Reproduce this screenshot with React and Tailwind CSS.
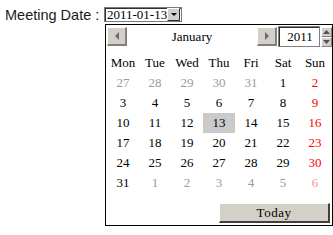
import React from "react";

const serif = { fontFamily: '"Liberation Serif", "Times New Roman", serif' };

const weeks = [
  [["27", "o"], ["28", "o"], ["29", "o"], ["30", "o"], ["31", "o"], ["1", "n"], ["2", "s"]],
  [["3", "n"], ["4", "n"], ["5", "n"], ["6", "n"], ["7", "n"], ["8", "n"], ["9", "s"]],
  [["10", "n"], ["11", "n"], ["12", "n"], ["13", "t"], ["14", "n"], ["15", "n"], ["16", "s"]],
  [["17", "n"], ["18", "n"], ["19", "n"], ["20", "n"], ["21", "n"], ["22", "n"], ["23", "s"]],
  [["24", "n"], ["25", "n"], ["26", "n"], ["27", "n"], ["28", "n"], ["29", "n"], ["30", "s"]],
  [["31", "n"], ["1", "o"], ["2", "o"], ["3", "o"], ["4", "o"], ["5", "o"], ["6", "os"]],
];

const cls = {
  n: "text-black",
  s: "text-[#ff0000]",
  o: "text-[#9a9a9a]",
  os: "text-[#ff8c8c]",
  t: "text-black bg-[#cacaca]",
};

function Tri({ dir, color = "#707070", w = 4, h = 8 }) {
  const pts =
    dir === "left"
      ? `${w},0 0,${h / 2} ${w},${h}`
      : dir === "right"
      ? `0,0 ${w},${h / 2} 0,${h}`
      : dir === "up"
      ? `0,${h} ${w / 2},0 ${w},${h}`
      : `0,0 ${w},0 ${w / 2},${h}`;
  return (
    <svg width={w} height={h} viewBox={`0 0 ${w} ${h}`} className="block">
      <polygon points={pts} fill={color} />
    </svg>
  );
}

export default function App() {
  return (
    <div className="w-[333px] h-[235px] bg-white overflow-hidden" style={serif}>
      <div className="flex items-start pl-[5px] pt-[7px]">
        <span
          className="text-[14.5px] leading-[17px] text-[#1a1a1a] w-[99px] whitespace-nowrap"
          style={{ fontFamily: '"Liberation Sans", Arial, sans-serif' }}
        >
          Meeting Date :
        </span>
        <div className="w-[78px] h-[15px] border border-[#7a7a7a] shadow-[inset_1px_1px_0_#303030] bg-white flex items-start pl-[2px] pr-[1px]">
          <span className="text-[13px] leading-[13px] text-black flex-1 whitespace-nowrap">2011-01-13</span>
          <div className="w-[13px] h-[13px] bg-[#d4d0c8] border-t border-l border-t-white border-l-white border-b border-r border-b-[#303030] border-r-[#303030] flex items-center justify-center">
            <Tri dir="down" color="#000" w={6} h={3} />
          </div>
        </div>
      </div>

      <div className="ml-[105px] w-[228px] h-[202px] border border-black bg-white">
        <div className="flex items-center h-[21px] mt-[1px] pl-[1px]">
          <div className="w-[20px] h-[19px] bg-[#d4d0c8] border-t border-l border-white border-b-2 border-r-2 border-b-[#808080] border-r-[#808080] flex items-center justify-center">
            <Tri dir="left" color="#6a6a78" />
          </div>
          <div className="flex-1 text-center text-[13px] leading-[21px] text-black">January</div>
          <div className="w-[20px] h-[19px] bg-[#d4d0c8] border-t border-l border-white border-b-2 border-r-2 border-b-[#808080] border-r-[#808080] flex items-center justify-center">
            <Tri dir="right" color="#6a6a78" />
          </div>
          <div className="ml-[1px] w-[42px] h-[21px] bg-white border border-[#808080] shadow-[inset_1px_1px_0_#303030] flex items-center justify-center">
            <span className="text-[13px] leading-[15px] text-black pl-[2px]">2011</span>
          </div>
          <div className="ml-[1px] w-[11px] h-[20px] flex flex-col">
            <div className="h-[10px] bg-[#d4d0c8] border-t border-l border-white border-b border-r border-b-[#808080] border-r-[#808080] flex items-center justify-center">
              <Tri dir="up" color="#505060" w={7} h={4} />
            </div>
            <div className="h-[10px] bg-[#d4d0c8] border-t border-l border-white border-b border-r border-b-[#808080] border-r-[#808080] flex items-center justify-center">
              <Tri dir="down" color="#505060" w={7} h={4} />
            </div>
          </div>
        </div>

        <div className="mt-[6px] pl-[1px] grid grid-cols-[repeat(7,32px)] text-[13px] leading-[20px] text-center">
          {["Mon", "Tue", "Wed", "Thu", "Fri", "Sat", "Sun"].map((d) => (
            <div key={d} className="h-[20px] text-black">
              {d}
            </div>
          ))}
          {weeks.flat().map(([n, k], i) => (
            <div key={i} className={`h-[20px] ${cls[k]}`}>
              {n}
            </div>
          ))}
        </div>

        <div className="mt-[10px] ml-[113px] w-[111px] h-[20px] bg-[#d4d0c8] border-t border-l border-white border-b-2 border-r-2 border-b-[#404040] border-r-[#404040] flex items-center justify-center text-[13px] text-black tracking-[0.5px]">
          Today
        </div>
      </div>
    </div>
  );
}
